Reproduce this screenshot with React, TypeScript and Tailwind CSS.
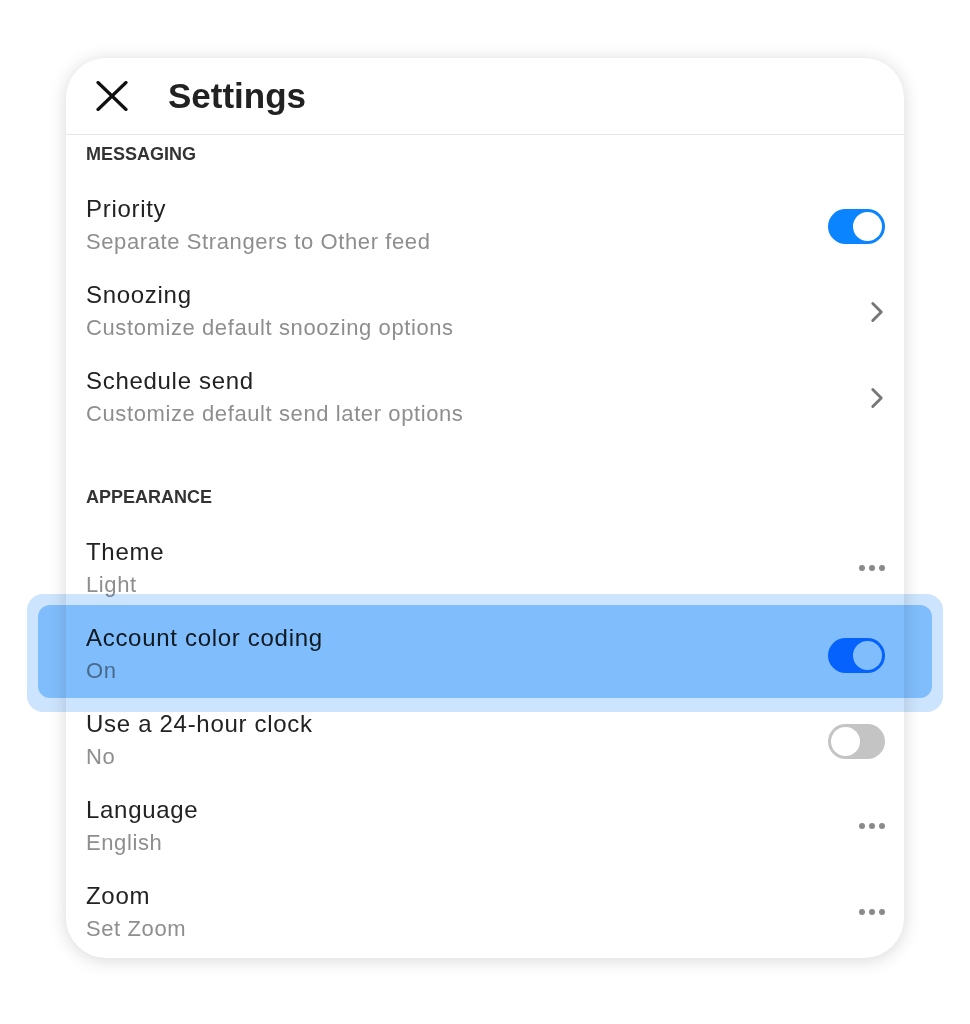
import { ChevronRight } from "lucide-react";

type Row = {
  title: string;
  sub: string;
  control: "on" | "off" | "chevron" | "dots";
};

const MESSAGING: Row[] = [
  { title: "Priority", sub: "Separate Strangers to Other feed", control: "on" },
  { title: "Snoozing", sub: "Customize default snoozing options", control: "chevron" },
  { title: "Schedule send", sub: "Customize default send later options", control: "chevron" },
];

const APPEARANCE: Row[] = [
  { title: "Theme", sub: "Light", control: "dots" },
  { title: "Account color coding", sub: "On", control: "on" },
  { title: "Use a 24-hour clock", sub: "No", control: "off" },
  { title: "Language", sub: "English", control: "dots" },
  { title: "Zoom", sub: "Set Zoom", control: "dots" },
];

function Toggle({ on }: { on: boolean }) {
  return (
    <div
      className={
        "flex h-[35px] w-[57px] items-center rounded-full p-[3px] " +
        (on ? "justify-end bg-[#0a84ff]" : "justify-start bg-[#c4c4c4]")
      }
    >
      <div className="h-[29px] w-[29px] rounded-full bg-white" />
    </div>
  );
}

function Dots() {
  return (
    <div className="-mt-[2px] flex gap-[4px]">
      <span className="h-[6px] w-[6px] rounded-full bg-[#8a8a8a]" />
      <span className="h-[6px] w-[6px] rounded-full bg-[#8a8a8a]" />
      <span className="h-[6px] w-[6px] rounded-full bg-[#8a8a8a]" />
    </div>
  );
}

function SettingRow({ row }: { row: Row }) {
  return (
    <div className="flex h-[86px] items-center justify-between pl-[20px] pr-[19px]">
      <div className="flex flex-col">
        <span className="text-[24px] leading-[32px] tracking-[0.7px] text-[#222]">{row.title}</span>
        <span className="text-[22px] leading-[34px] tracking-[0.6px] text-[#8e8e8e]">{row.sub}</span>
      </div>
      {row.control === "on" && <Toggle on />}
      {row.control === "off" && <Toggle on={false} />}
      {row.control === "chevron" && (
        <ChevronRight size={34} strokeWidth={2} className="-mr-[9px] text-[#777]" />
      )}
      {row.control === "dots" && <Dots />}
    </div>
  );
}

function Section({ label, rows, className = "" }: { label: string; rows: Row[]; className?: string }) {
  return (
    <div className={className}>
      <div className="h-[48px] pl-[20px] pt-[9px] text-[18px] font-bold leading-[20px] text-[#333]">{label}</div>
      {rows.map((r) => (
        <SettingRow key={r.title} row={r} />
      ))}
    </div>
  );
}

export default function App() {
  return (
    <div className="relative h-[1024px] w-[970px] bg-white font-['Liberation_Sans',Arial,sans-serif]">
      <div className="pl-[66px] pt-[58px]">
        <div className="h-[900px] w-[838px] overflow-hidden rounded-[40px] bg-white shadow-[0_2px_18px_rgba(0,0,0,0.16)]">
          <div className="flex h-[77px] items-center border-b border-[#e6e6e6] pl-[30px]">
            <svg width="32" height="30" viewBox="0 0 32 30" className="text-[#111]">
              <path d="M2 1.5L30 28.5M30 1.5L2 28.5" stroke="currentColor" strokeWidth="3.2" strokeLinecap="round" fill="none" />
            </svg>
            <span className="ml-[40px] text-[35px] font-bold text-[#222]">Settings</span>
          </div>
          <Section label="MESSAGING" rows={MESSAGING} />
          <Section label="APPEARANCE" rows={APPEARANCE} className="mt-[37px]" />
        </div>
      </div>

      {/* highlight over "Account color coding" */}
      <div className="absolute left-[27px] top-[594px] h-[118px] w-[916px] rounded-[16px] bg-[#cce4fd] p-[11px] mix-blend-multiply">
        <div className="h-[93px] w-full rounded-[12px] bg-[#80bdfc]" />
      </div>
    </div>
  );
}
